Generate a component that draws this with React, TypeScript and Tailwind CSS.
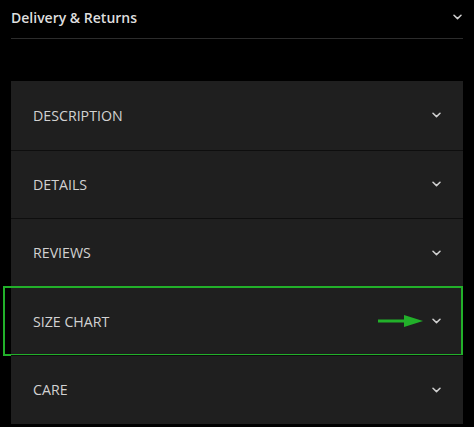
import React from 'react';

const sections = ['DESCRIPTION', 'DETAILS', 'REVIEWS', 'SIZE CHART', 'CARE'];

function Chevron({ className = '' }: { className?: string }) {
  return (
    <svg width="9" height="6" viewBox="0 0 9 6" className={className} fill="none">
      <path d="M1 1.2 L4.5 4.6 L8 1.2" stroke="currentColor" strokeWidth="1.5" strokeLinecap="round" strokeLinejoin="round" />
    </svg>
  );
}

function Arrow() {
  return (
    <svg width="46" height="14" viewBox="0 0 46 14" className="text-[#22b02a]">
      <line x1="0" y1="7" x2="28" y2="7" stroke="currentColor" strokeWidth="3" strokeLinecap="round" />
      <polygon points="26,1 45,7 26,13" fill="currentColor" />
    </svg>
  );
}

export default function App() {
  return (
    <div className="w-[474px] h-[427px] bg-black overflow-hidden px-[11px] font-['Open_Sans',sans-serif]">
      {/* Delivery header */}
      <div className="h-[39px] flex items-center justify-between border-b border-[#2c2c2c] pb-[4px]">
        <span className="text-[14px] font-semibold text-[#dedede]">Delivery &amp; Returns</span>
        <Chevron className="text-[#cfcfcf] mr-[1px]" />
      </div>

      {/* Accordion */}
      <div className="mt-[42px] bg-[#1f1f1f] flex flex-col">
        {sections.map((s, i) => (
          <div
            key={s}
            className={`relative h-[68.5px] flex items-center justify-between pl-[22px] pr-[22px] ${i > 0 ? 'border-t border-[#0e0e0e]' : ''}`}
          >
            <span className="text-[14.2px] text-[#d2d2d2]">{s}</span>
            <div className="flex items-center gap-[8px]">
              {s === 'SIZE CHART' && <Arrow />}
              <Chevron className="text-[#d0d0d0]" />
            </div>
            {s === 'SIZE CHART' && (
              <div className="absolute -left-[8px] right-0 -top-[2px] -bottom-[1px] border-2 border-[#22b02a] pointer-events-none" />
            )}
          </div>
        ))}
      </div>
    </div>
  );
}
